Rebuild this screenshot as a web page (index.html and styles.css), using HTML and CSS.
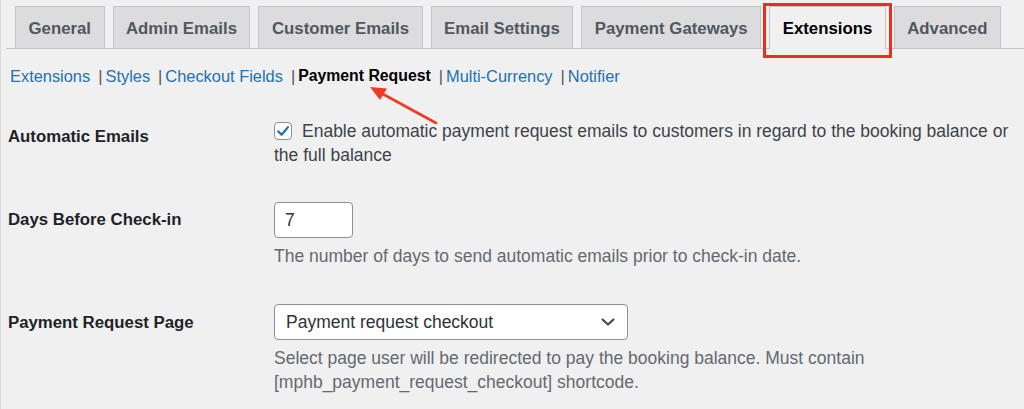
FILE: index.html
```html
<!DOCTYPE html>
<html lang="en">
<head>
<meta charset="utf-8">
<title>Settings - Extensions</title>
<link rel="stylesheet" href="styles.css">
</head>
<body>
<div class="page">
  <nav class="nav-tabs">
    <a class="nav-tab">General</a>
    <a class="nav-tab">Admin Emails</a>
    <a class="nav-tab">Customer Emails</a>
    <a class="nav-tab">Email Settings</a>
    <a class="nav-tab">Payment Gateways</a>
    <a class="nav-tab nav-tab-active">Extensions</a>
    <a class="nav-tab">Advanced</a>
  </nav>

  <ul class="subsubsub">
    <li><a class="sub-link">Extensions</a><span class="sep">|</span></li>
    <li><a class="sub-link">Styles</a><span class="sep">|</span></li>
    <li><a class="sub-link">Checkout Fields</a><span class="sep">|</span></li>
    <li><span class="current">Payment Request</span><span class="sep">|</span></li>
    <li><a class="sub-link">Multi-Currency</a><span class="sep">|</span></li>
    <li><a class="sub-link">Notifier</a></li>
  </ul>

  <div class="form-table">
    <div class="form-row">
      <div class="th">Automatic Emails</div>
      <div class="td">
        <label class="check-label"><span class="checkbox"><svg viewBox="0 0 18 18" width="18" height="18"><path d="M4.2 9.4 L7.6 12.8 L13.9 5.2" fill="none" stroke="#2271b1" stroke-width="2.2" stroke-linecap="round" stroke-linejoin="round"/></svg></span>Enable automatic payment request emails to customers in regard to the booking balance or the full balance</label>
      </div>
    </div>

    <div class="form-row">
      <div class="th">Days Before Check-in</div>
      <div class="td">
        <div class="text-input">7</div>
        <p class="description">The number of days to send automatic emails prior to check-in date.</p>
      </div>
    </div>

    <div class="form-row row-select">
      <div class="th">Payment Request Page</div>
      <div class="td">
        <div class="select">
          <span>Payment request checkout</span>
          <svg class="chevron" viewBox="0 0 14 8" width="14" height="8"><path d="M1.5 1.5 L7 6.5 L12.5 1.5" fill="none" stroke="#3c434a" stroke-width="2" stroke-linecap="round" stroke-linejoin="round"/></svg>
        </div>
        <p class="description">Select page user will be redirected to pay the booking balance. Must contain [mphb_payment_request_checkout] shortcode.</p>
      </div>
    </div>
  </div>

  <svg class="arrow" viewBox="0 0 1024 409" width="1024" height="409">
    <line x1="435" y1="123" x2="380" y2="93" stroke="#ef3a25" stroke-width="2.6" stroke-linecap="round"/>
    <polygon points="369,87 386,88.5 379,100" fill="#ef3a25"/>
  </svg>
</div>
</body>
</html>
```

FILE: styles.css
```css
* { box-sizing: border-box; }

html, body {
  margin: 0;
  padding: 0;
  background: #f0f0f1;
}

body {
  font-family: "Liberation Sans", Arial, sans-serif;
  color: #3c434a;
}

.page {
  position: relative;
  width: 1024px;
  height: 409px;
  overflow: hidden;
  border-left: 1px solid #dadadc;
}

/* Tabs */
.nav-tabs {
  display: flex;
  gap: 8px;
  margin: 0 0 0 5px;
  padding: 6px 0 0 9px;
  border-bottom: 1px solid #c3c4c7;
  height: 49px;
}

.nav-tab {
  position: relative;
  display: flex;
  align-items: center;
  height: 42px;
  padding: 2px 12.5px 0;
  background: #dcdcde;
  border: 1px solid #c3c4c7;
  border-bottom: none;
  color: #50575e;
  font-size: 16.8px;
  font-weight: 700;
  white-space: nowrap;
}

.nav-tab-active {
  background: #f0f0f1;
  color: #000;
  height: 43px;
  margin-bottom: -1px;
}

.nav-tab-active::after {
  content: "";
  position: absolute;
  left: -7px;
  right: -7px;
  top: -4px;
  bottom: -9px;
  border: 3px solid #ee2d1d;
}

/* Sub links */
.subsubsub {
  display: flex;
  list-style: none;
  margin: 15px 0 0 9px;
  padding: 0;
  font-size: 16.4px;
  line-height: 24px;
}

.subsubsub li {
  display: flex;
  white-space: nowrap;
}

.sub-link {
  color: #2271b1;
}

.current {
  color: #000;
  font-weight: 700;
  font-size: 15.8px;
}

.sep {
  color: #50575e;
  margin: 0 3px 0 8px;
}

/* Form */
.form-table {
  padding-top: 11px;
}

.form-row {
  display: grid;
  grid-template-columns: 273px 1fr;
  padding-bottom: 15px;
}

.th {
  padding: 26px 0 0 7px;
  font-size: 16.8px;
  font-weight: 700;
  line-height: 24px;
  color: #1d2327;
}

.td {
  padding: 20px 10px 0 0;
  font-size: 17.5px;
  line-height: 24px;
}

.row-select .td { padding-top: 21px; }
.row-select .th { padding-top: 28px; }

.check-label {
  color: #3c434a;
}

.checkbox {
  display: inline-block;
  width: 18px;
  height: 18px;
  margin-right: 10px;
  vertical-align: -3px;
  background: #fff;
  border: 1px solid #8c8f94;
  border-radius: 4px;
  position: relative;
}

.checkbox svg {
  position: absolute;
  left: -1px;
  top: -1px;
}

.text-input {
  width: 79px;
  height: 36px;
  padding: 0 10px;
  display: flex;
  align-items: center;
  background: #fff;
  border: 1px solid #8c8f94;
  border-radius: 4px;
  color: #2c3338;
  font-size: 17.5px;
}

.select {
  width: 354px;
  height: 36px;
  padding: 0 12px 0 11px;
  display: flex;
  align-items: center;
  justify-content: space-between;
  background: #fff;
  border: 1px solid #8c8f94;
  border-radius: 4px;
  color: #2c3338;
  font-size: 17.5px;
}

.description {
  margin: 6px 0 0;
  color: #646970;
  font-size: 17.5px;
  line-height: 24px;
}

.arrow {
  position: absolute;
  left: 0;
  top: 0;
  pointer-events: none;
}
```
